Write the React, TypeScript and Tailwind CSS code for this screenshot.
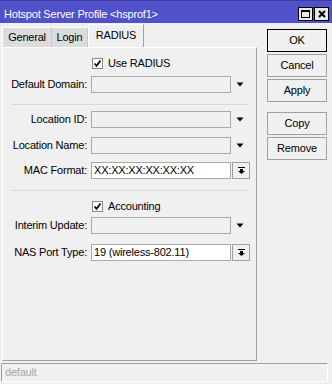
import React from "react";

const font = { fontFamily: '"Liberation Sans", Arial, sans-serif', fontSize: "11px", letterSpacing: "-0.2px" };

function Arrow() {
  return (
    <div className="w-[17px] h-[17px] flex items-center justify-center">
      <svg width="8" height="5" viewBox="0 0 8 5"><polygon points="0.5,0.5 7.5,0.5 4,4.5" fill="#000" /></svg>
    </div>
  );
}

function SpinBtn() {
  return (
    <div className="w-[18px] h-[17px] ml-[1px] border border-[#a0a0a0] bg-[#f0f0f0] flex items-center justify-center">
      <svg width="7" height="7" viewBox="0 0 7 7">
        <rect x="0" y="0" width="7" height="1" fill="#000" />
        <rect x="2" y="2" width="3" height="2" fill="#000" />
        <polygon points="0,4 7,4 3.5,7" fill="#000" />
      </svg>
    </div>
  );
}

function Check({ label }: { label: string }) {
  return (
    <div className="flex items-center h-[12px] pl-[89px]">
      <div className="w-[11px] h-[11px] border border-[#8a8a8a] bg-white flex items-center justify-center">
        <svg width="9" height="9" viewBox="0 0 9 9"><polyline points="1.5,4.5 3.5,6.8 7.5,1.5" fill="none" stroke="#000" strokeWidth="1.7" /></svg>
      </div>
      <span className="ml-[5px] text-black leading-none whitespace-nowrap">{label}</span>
    </div>
  );
}

function Row({ label, value, enabled, spin, mt }: { label: string; value?: string; enabled?: boolean; spin?: boolean; mt: string }) {
  return (
    <div className={`flex items-center h-[17px] ${mt}`}>
      <div className="w-[84px] text-right text-black leading-none whitespace-nowrap">{label}</div>
      <div className={`ml-[4px] w-[140px] h-[17px] border border-[#a9a9a9] ${enabled ? "bg-white" : "bg-[#f0f0f0]"} flex items-center px-[2px] text-black leading-none whitespace-nowrap`}>
        {value}
      </div>
      {spin ? <SpinBtn /> : <Arrow />}
    </div>
  );
}

function Btn({ label, def }: { label: string; def?: boolean }) {
  return (
    <div className={`w-[60px] h-[23px] border ${def ? "border-black" : "border-[#a0a0a0]"} bg-[#f0f0f0] flex items-center justify-center text-black`}>
      {label}
    </div>
  );
}

export default function App() {
  return (
    <div className="w-[332px] h-[384px] bg-[#f0f0f0] flex flex-col overflow-hidden" style={font}>
      <div className="h-[23px] bg-[#5151c9] border-t border-[#3a3aa0] flex items-center pl-[4px] pr-[3px] pt-[4px]">
        <span className="text-white leading-none whitespace-nowrap">Hotspot Server Profile &lt;hsprof1&gt;</span>
        <div className="ml-auto flex gap-[1px]">
          <div className="w-[15px] h-[14px] bg-[#e8e8e8] border border-black flex items-center justify-center">
            <div className="w-[9px] h-[8px] border border-black border-t-2" />
          </div>
          <div className="w-[15px] h-[14px] bg-[#e8e8e8] border border-black flex items-center justify-center">
            <svg width="8" height="8" viewBox="0 0 8 8"><path d="M1 1 L7 7 M7 1 L1 7" stroke="#000" strokeWidth="2" /></svg>
          </div>
        </div>
      </div>
      <div className="flex">
        <div className="ml-[2px] w-[255px] flex flex-col">
          <div className="h-[24px] flex items-end">
            <div className="h-[20px] w-[50px] bg-[#dcdcdc] border-l border-t border-white border-r border-r-[#c8c8c8] flex items-center justify-center text-black">General</div>
            <div className="h-[20px] w-[36px] bg-[#dcdcdc] border-t border-white border-r border-r-[#c8c8c8] flex items-center justify-center text-black">Login</div>
            <div className="h-[23px] w-[56px] bg-[#f0f0f0] border-l border-t border-white border-r border-r-[#a0a0a0] flex items-center justify-center text-black pb-[2px]">RADIUS</div>
          </div>
          <div className="h-[314px] border-t border-l border-white border-r border-r-[#a0a0a0] border-b border-b-[#a0a0a0] flex flex-col">
            <div className="mt-[9px]"><Check label="Use RADIUS" /></div>
            <Row label="Default Domain:" mt="mt-[7px]" />
            <div className="mt-[11px] ml-[8px] w-[238px] h-[1px] bg-[#d8d8d8]" />
            <Row label="Location ID:" mt="mt-[6px]" />
            <Row label="Location Name:" mt="mt-[9px]" />
            <Row label="MAC Format:" value="XX:XX:XX:XX:XX:XX" enabled spin mt="mt-[8px]" />
            <div className="mt-[11px] ml-[8px] w-[238px] h-[1px] bg-[#d8d8d8]" />
            <div className="mt-[9px]"><Check label="Accounting" /></div>
            <Row label="Interim Update:" mt="mt-[5px]" />
            <Row label="NAS Port Type:" value="19 (wireless-802.11)" enabled spin mt="mt-[10px]" />
          </div>
        </div>
        <div className="ml-[10px] pt-[6px] flex flex-col">
          <Btn label="OK" def />
          <div className="mt-[2px]"><Btn label="Cancel" /></div>
          <div className="mt-[2px]"><Btn label="Apply" /></div>
          <div className="mt-[10px]"><Btn label="Copy" /></div>
          <div className="mt-[2px]"><Btn label="Remove" /></div>
        </div>
      </div>
      <div className="mt-[2px] ml-[1px] w-[327px] h-[19px] border border-[#a0a0a0] border-r-white border-b-white flex items-center pl-[3px] text-[#a8a8a8]">default</div>
    </div>
  );
}
